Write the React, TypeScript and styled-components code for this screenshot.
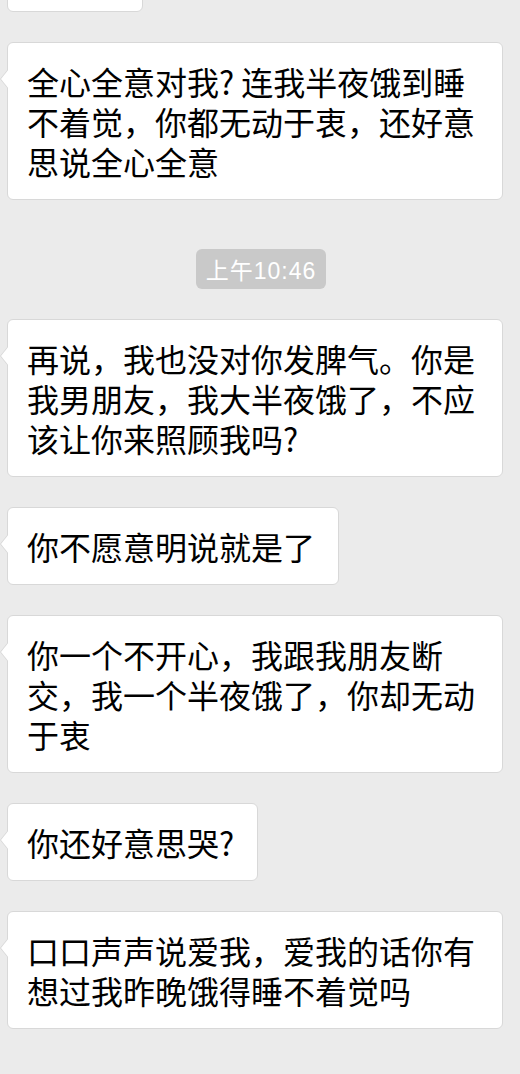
import styled, {createGlobalStyle} from 'styled-components'

const GlobalStyle = createGlobalStyle`
    body {
        margin: 0;
        background: #ebebeb;
        font-family: "Noto Sans CJK SC", "Noto Sans", sans-serif;
    }
`

const Screen = styled.div`
    width: 520px;
    height: 1074px;
    overflow: hidden;
    background: #ebebeb;
`

// scrolled chat: first bubble is partly above the top edge
const Thread = styled.div`
    display: flex;
    flex-direction: column;
    align-items: flex-start;
    gap: 30px;
    margin-top: -66px;
    padding: 0 17px 0 7px;
`

const Bubble = styled.div`
    position: relative;
    max-width: 496px;
    box-sizing: border-box;
    padding: 18px 23px 18px 19px;
    background: #ffffff;
    border: 1px solid #d8d8d8;
    border-radius: 6px;
    color: #000;
    font-size: 32px;
    line-height: 40px;
    &::before,
    &::after {
        content: '';
        position: absolute;
        top: 26px;
        border-style: solid;
        border-width: 10px 8px 10px 0;
        border-color: transparent;
    }
    &::before {
        left: -8px;
        border-right-color: #d8d8d8;
    }
    &::after {
        left: -7px;
        border-right-color: #ffffff;
    }
`

// tail end of an earlier message, scrolled out of view
const PrevBubble = styled(Bubble)`
    width: 136px;
    height: 78px;
`

const Time = styled.div`
    align-self: center;
    margin: 19px 0 0 12px;
    height: 40px;
    padding: 0 10px 0 10px;
    display: flex;
    align-items: center;
    background: #c9c9c9;
    border-radius: 6px;
    color: #fff;
    font-family: "Liberation Sans", "Noto Sans CJK SC", sans-serif;
    font-size: 23px;
    letter-spacing: 1px;
`

const messages = [
    {id: 1, text: '全心全意对我? 连我半夜饿到睡不着觉，你都无动于衷，还好意思说全心全意'},
    {id: 2, time: '上午10:46'},
    {id: 3, text: '再说，我也没对你发脾气。你是我男朋友，我大半夜饿了，不应该让你来照顾我吗?'},
    {id: 4, text: '你不愿意明说就是了'},
    {id: 5, text: '你一个不开心，我跟我朋友断交，我一个半夜饿了，你却无动于衷'},
    {id: 6, text: '你还好意思哭?'},
    {id: 7, text: '口口声声说爱我，爱我的话你有想过我昨晚饿得睡不着觉吗'},
]

function App(){
    return (
        <Screen>
            <GlobalStyle/>
            <Thread>
                <PrevBubble/>
                {messages.map(m => m.time
                    ? <Time key={m.id}>{m.time}</Time>
                    : <Bubble key={m.id}>{m.text}</Bubble>
                )}
            </Thread>
        </Screen>
    )
}

export default App
